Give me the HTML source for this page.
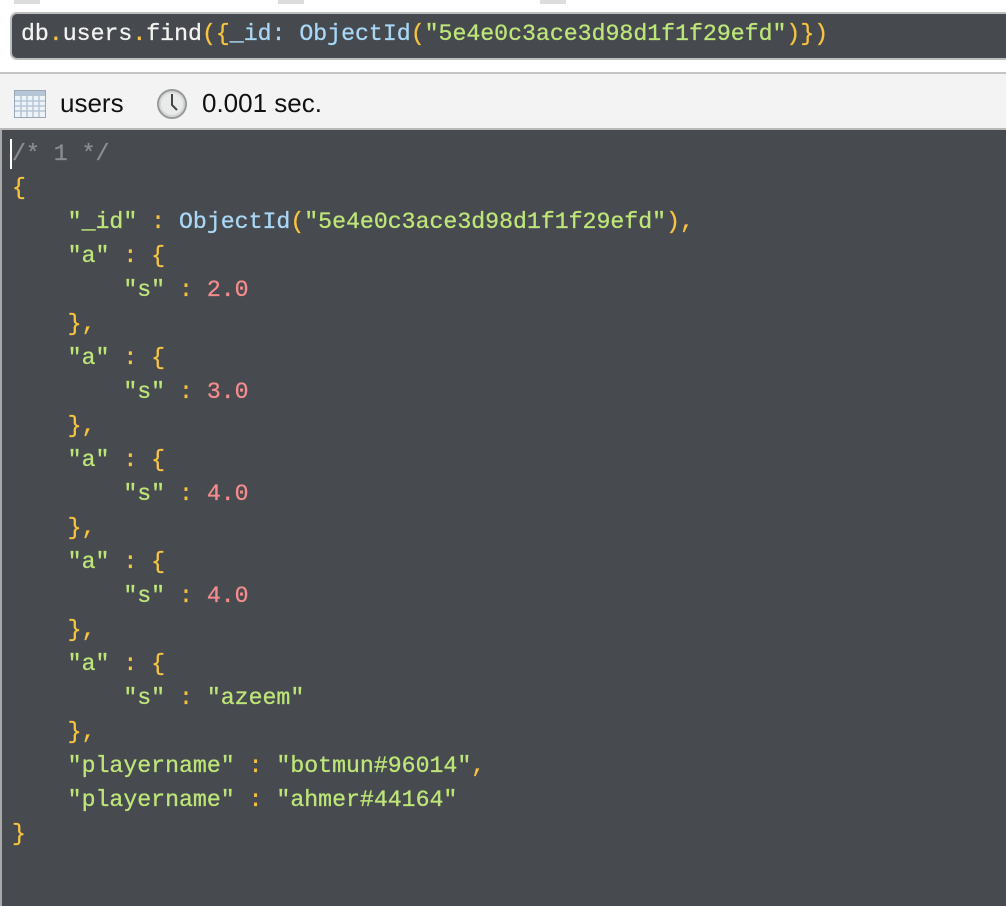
<!DOCTYPE html>
<html><head><style>
body{margin:0;width:1006px;height:906px;overflow:hidden;background:#fff;position:relative;font-family:"Liberation Sans",sans-serif}
.q{position:absolute;left:10px;top:12px;width:1010px;height:48px;background:#46494d;border:2px solid #bdbdbd;border-radius:7px;box-sizing:border-box}
.q pre{margin:0;position:absolute;left:9px;top:7px}
pre{font-family:"Liberation Mono",monospace;font-size:23.2px;color:#f2f2f2;-webkit-text-stroke:0.3px}
.tb{position:absolute;left:0;top:72px;width:1006px;height:58px;background:#f3f3f3;border-top:2px solid #c4c4c4;border-bottom:2px solid #b8b8b8;box-sizing:border-box}
.ed{position:absolute;left:0;top:130px;width:1006px;height:776px;background:#474a4e;border-left:2px solid #a9a9a9;box-sizing:border-box}
.ed pre{margin:0;position:absolute;left:10px;top:7px;line-height:34px}
.y{color:#f6c342}.g{color:#bde57a}.b{color:#a9d7f5}.n{color:#f38d8d}.c{color:#8a8c8f}.w{color:#f2f2f2}
</style></head><body>
<div style="position:absolute;left:14px;top:0;width:26px;height:4px;background:#ddd"></div>
<div style="position:absolute;left:278px;top:0;width:26px;height:4px;background:#ddd"></div>
<div style="position:absolute;left:540px;top:0;width:26px;height:4px;background:#ddd"></div>
<div class="q"><pre>db<span class="y">.</span>users<span class="y">.</span>find<span class="y">({</span><span class="b">_id: ObjectId</span><span class="y">(</span><span class="g">"5e4e0c3ace3d98d1f1f29efd"</span><span class="y">)})</span></pre></div>
<div class="tb">
<svg style="position:absolute;left:14px;top:16px" width="32" height="28" viewBox="0 0 32 28"><rect x="0.5" y="0.5" width="31" height="27" fill="#eef3f8" stroke="#9aa8b6"/><rect x="1" y="1" width="30" height="5" fill="#b7c6d6"/><g stroke="#b7c6d6" stroke-width="1.5"><path d="M1 11H31M1 16H31M1 21H31M7 6V27M13 6V27M19 6V27M25 6V27"/></g></svg>
<span style="position:absolute;left:60px;top:14px;font-size:26px;color:#111">users</span>
<svg style="position:absolute;left:156px;top:14px" width="32" height="32" viewBox="0 0 32 32"><circle cx="16" cy="16" r="14" fill="#d5d8d8" stroke="#999" stroke-width="2"/><circle cx="16" cy="16" r="11" fill="#e9ebea"/><path d="M16 6V17L21 22" stroke="#444" stroke-width="2" fill="none"/></svg>
<span style="position:absolute;left:202px;top:14px;font-size:26px;color:#111">0.001 sec.</span>
</div>
<div class="ed">
<div style="position:absolute;left:8px;top:9px;width:2px;height:30px;background:#fff"></div>
<pre><span class="c">/* 1 */</span>
<span class="y">{</span>
    <span class="g">"_id"</span> <span class="y">:</span> <span class="b">ObjectId</span><span class="y">(</span><span class="g">"5e4e0c3ace3d98d1f1f29efd"</span><span class="y">),</span>
    <span class="g">"a"</span> <span class="y">: {</span>
        <span class="g">"s"</span> <span class="y">:</span> <span class="n">2.0</span>
    <span class="y">},</span>
    <span class="g">"a"</span> <span class="y">: {</span>
        <span class="g">"s"</span> <span class="y">:</span> <span class="n">3.0</span>
    <span class="y">},</span>
    <span class="g">"a"</span> <span class="y">: {</span>
        <span class="g">"s"</span> <span class="y">:</span> <span class="n">4.0</span>
    <span class="y">},</span>
    <span class="g">"a"</span> <span class="y">: {</span>
        <span class="g">"s"</span> <span class="y">:</span> <span class="n">4.0</span>
    <span class="y">},</span>
    <span class="g">"a"</span> <span class="y">: {</span>
        <span class="g">"s"</span> <span class="y">:</span> <span class="g">"azeem"</span>
    <span class="y">},</span>
    <span class="g">"playername"</span> <span class="y">:</span> <span class="g">"botmun#96014"</span><span class="y">,</span>
    <span class="g">"playername"</span> <span class="y">:</span> <span class="g">"ahmer#44164"</span>
<span class="y">}</span></pre>
</div>
</body></html>
